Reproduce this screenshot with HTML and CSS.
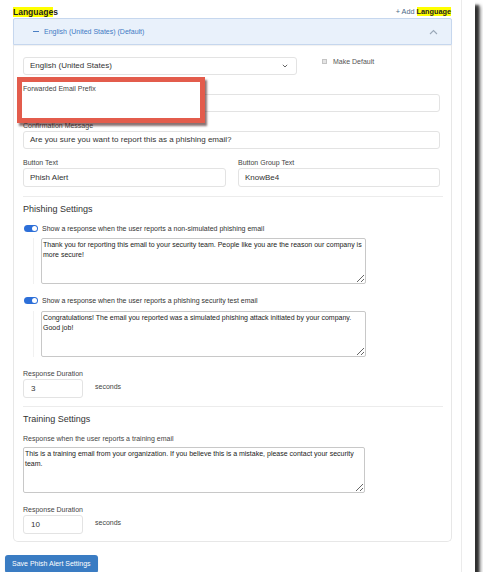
FILE: index.html
```html
<!DOCTYPE html>
<html>
<head>
<meta charset="utf-8">
<link rel="stylesheet" href="styles.css">
</head>
<body>
<div class="shot">
  <div class="page">
    <div class="main">
      <div class="top-row">
        <div class="title"><mark>Language</mark>s</div>
        <div class="add">+ Add <b><mark>Language</mark></b></div>
      </div>
      <div class="acc-head">
        <span class="dash"></span>
        <span class="acc-title">English (United States) (Default)</span>
        <svg class="chev" width="9" height="6" viewBox="0 0 9 6"><path d="M1 5 L4.5 1.5 L8 5" fill="none" stroke="#9aa8b8" stroke-width="1.1"/></svg>
      </div>
      <div class="acc-body">
        <div class="row1">
          <div class="input select">
            <span>English (United States)</span>
            <svg width="6" height="4" viewBox="0 0 6 4"><path d="M0.8 0.8 L3 3 L5.2 0.8" fill="none" stroke="#555" stroke-width="0.9"/></svg>
          </div>
          <label class="check"><span class="box"></span>Make Default</label>
        </div>

        <div class="field annotated">
          <div class="callout"></div>
          <label class="lbl top">Forwarded Email Prefix</label>
          <div class="input"></div>
        </div>

        <div class="field">
          <label class="lbl">Confirmation Message</label>
          <div class="input">Are you sure you want to report this as a phishing email?</div>
        </div>

        <div class="two-col">
          <div class="field">
            <label class="lbl">Button Text</label>
            <div class="input">Phish Alert</div>
          </div>
          <div class="field">
            <label class="lbl">Button Group Text</label>
            <div class="input">KnowBe4</div>
          </div>
        </div>

        <div class="sep"></div>
        <h3 class="section">Phishing Settings</h3>

        <div class="toggle-row">
          <span class="toggle"><span class="knob"></span></span>
          <span>Show a response when the user reports a non-simulated phishing email</span>
        </div>
        <div class="indent first">
          <textarea class="area">Thank you for reporting this email to your security team. People like you are the reason our company is more secure!</textarea>
        </div>

        <div class="toggle-row second">
          <span class="toggle"><span class="knob"></span></span>
          <span>Show a response when the user reports a phishing security test email</span>
        </div>
        <div class="indent">
          <textarea class="area">Congratulations! The email you reported was a simulated phishing attack initiated by your company. Good job!</textarea>
        </div>

        <div class="duration">
          <label class="lbl">Response Duration</label>
          <div class="dur-row">
            <div class="input small">3</div>
            <span class="unit">seconds</span>
          </div>
        </div>

        <div class="sep sep2"></div>
        <h3 class="section section2">Training Settings</h3>
        <label class="lbl train-lbl">Response when the user reports a training email</label>
        <textarea class="area wide">This is a training email from your organization. If you believe this is a mistake, please contact your security team.</textarea>

        <div class="duration dur2">
          <label class="lbl">Response Duration</label>
          <div class="dur-row">
            <div class="input small">10</div>
            <span class="unit">seconds</span>
          </div>
        </div>
      </div>
    </div>
    <div class="footer">
      <button class="save">Save Phish Alert Settings</button>
    </div>
  </div>
</div>
</body>
</html>
```

FILE: styles.css
```css
* { box-sizing: border-box; }
html, body { margin: 0; padding: 0; background: #fff; }
body {
  font-family: "Liberation Sans", Arial, sans-serif;
  color: #333;
}
.shot {
  width: 475px;
  height: 572px;
  background: #fff;
  box-shadow: 4px 5px 2px rgba(0, 0, 0, 0.55), 5px 6px 4px rgba(0, 0, 0, 0.6);
  overflow: hidden;
}
.page {
  width: 462px;
  height: 100%;
  border-right: 1px solid #ebebeb;
}
.main {
  width: 452px;
  padding: 6px 0 0 13px;
}
.top-row {
  display: flex;
  justify-content: space-between;
  align-items: center;
  height: 11px;
  margin-bottom: 1px;
}
.title {
  font-weight: bold;
  font-size: 8.5px;
  color: #222;
}
mark {
  background: #ffff00;
  color: inherit;
  padding: 0;
}
.add {
  font-size: 7.3px;
  color: #4d6a88;
  padding-right: 1px;
}
.add b { color: #222; }

.acc-head {
  height: 27px;
  border: 1px solid #c6d7ee;
  background: #e9f1fb;
  border-radius: 2px 2px 0 0;
  display: flex;
  align-items: center;
  padding: 0 13px 0 19px;
  color: #3f7ac4;
  font-size: 7px;
  box-shadow: 0 1px 1px rgba(0,0,0,0.06);
}
.dash {
  width: 6px;
  height: 1px;
  background: #4a7fc4;
  margin-right: 5px;
}
.acc-title { flex: 1; }

.acc-body {
  border: 1px solid #e7e7e7;
  border-top: 0;
  border-radius: 0 0 5px 5px;
  padding: 12px 11px 7px 9px;
}
.row1 {
  display: flex;
  align-items: flex-start;
}
.input {
  height: 18px;
  border: 1px solid #e3e3e3;
  border-radius: 3px;
  padding: 0 6px;
  font-size: 8px;
  line-height: 16px;
  color: #333;
  background: #fff;
  white-space: nowrap;
}
.select {
  width: 274px;
  display: flex;
  justify-content: space-between;
  align-items: center;
  padding-right: 8px;
}
.check {
  margin-left: 25px;
  margin-top: 1px;
  display: flex;
  align-items: center;
  font-size: 7px;
  color: #555;
}
.box {
  width: 5px;
  height: 5px;
  border: 1px solid #c4c4c4;
  background: #e4e4e4;
  margin-right: 6px;
}
.field { margin-top: 9px; }
.lbl {
  display: block;
  font-size: 7px;
  line-height: 9px;
  margin-bottom: 1px;
  color: #444;
}
.annotated { position: relative; }
.callout {
  position: absolute;
  left: -6px;
  top: -7px;
  width: 188px;
  height: 46px;
  border: 5px solid #e35c4c;
  background: #fff;
  box-shadow: 2px 3px 2px rgba(60, 20, 20, 0.6);
  z-index: 1;
}
.lbl.top { position: relative; z-index: 2; }

.two-col {
  display: grid;
  grid-template-columns: 203px 202px;
  column-gap: 12px;
}
.two-col .input { height: 19px; line-height: 17px; }

.sep {
  margin-top: 9px;
  margin-right: -3px;
  border-top: 1px solid #ececec;
}
.section {
  margin: 7px 0 0;
  font-size: 9px;
  line-height: 11px;
  font-weight: normal;
  color: #333;
}
.toggle-row {
  margin-top: 9px;
  display: flex;
  align-items: center;
  font-size: 7px;
  line-height: 9px;
  color: #333;
}
.toggle-row.second { margin-top: 12px; }
.toggle {
  width: 14px;
  height: 7px;
  border-radius: 4px;
  background: #2d6fd8;
  margin: 0 4px 0 1px;
  position: relative;
  display: inline-block;
}
.knob {
  position: absolute;
  right: 1px;
  top: 1px;
  width: 5px;
  height: 5px;
  border-radius: 50%;
  background: #fff;
}
.indent {
  margin-left: 10px;
  border-left: 1px solid #f1f1f1;
  padding-left: 7px;
  margin-top: 6px;
}
.indent.first { margin-top: 5px; }
.area {
  display: block;
  width: 325px;
  height: 46px;
  margin: 0;
  border: 1px solid #c8c8c8;
  border-radius: 2px;
  padding: 1px 1px;
  font-family: "Liberation Sans", Arial, sans-serif;
  font-size: 7px;
  line-height: 10px;
  color: #222;
  resize: vertical;
  overflow: hidden;
}
.area.wide {
  width: 342px;
  height: 46px;
  margin-top: 4px;
}
.duration { margin-top: 12px; }
.dur2 { margin-top: 12px; }
.dur-row {
  display: flex;
  align-items: flex-start;
}
.input.small {
  width: 60px;
  height: 19px;
  line-height: 17px;
  padding-left: 7px;
}
.unit {
  margin-left: 12px;
  margin-top: 3px;
  font-size: 7px;
  line-height: 9px;
  color: #444;
}
.sep2 { margin-top: 8px; }
.section2 { margin-top: 7px; }
.train-lbl { margin-top: 9px; }

.footer {
  padding: 10px 0 0 5px;
}
.save {
  height: 18px;
  padding: 0 7px;
  border: 0;
  border-radius: 3px;
  background: #3a7cc3;
  color: #fff;
  font-family: "Liberation Sans", Arial, sans-serif;
  font-size: 7px;
  box-shadow: 0 1px 1px rgba(0,0,0,0.2);
}
```
